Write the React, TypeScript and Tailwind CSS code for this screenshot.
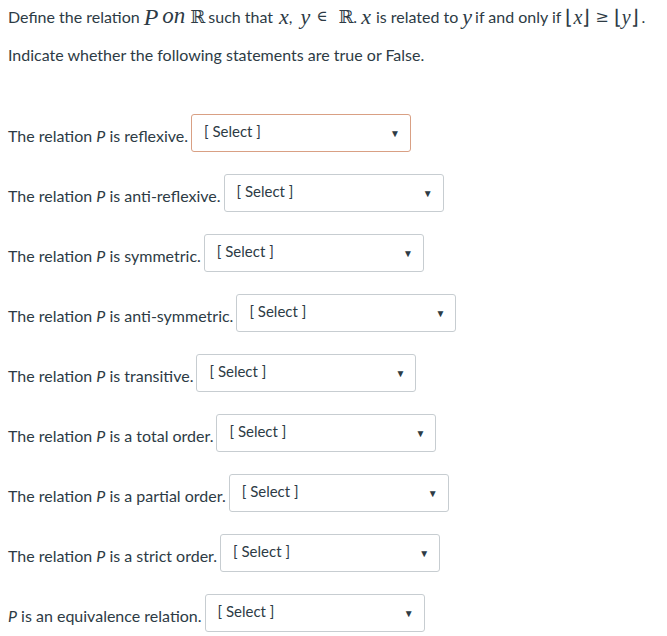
const rows: { pre?: string; post: string }[] = [
  { pre: 'The relation ', post: ' is reflexive.' },
  { pre: 'The relation ', post: ' is anti-reflexive.' },
  { pre: 'The relation ', post: ' is symmetric.' },
  { pre: 'The relation ', post: ' is anti-symmetric.' },
  { pre: 'The relation ', post: ' is transitive.' },
  { pre: 'The relation ', post: ' is a total order.' },
  { pre: 'The relation ', post: ' is a partial order.' },
  { pre: 'The relation ', post: ' is a strict order.' },
  { post: ' is an equivalence relation.' },
];

const serif = "font-['Liberation_Serif',serif]";
const dejavu = "font-['DejaVu_Serif',serif]";

function SelectBox({ focused }: { focused?: boolean }) {
  return (
    <div
      className={`ml-[3px] flex h-[38px] w-[220px] shrink-0 items-center justify-between rounded-[3px] bg-white pl-[12px] pr-[10px] ${
        focused ? 'border-[1.5px] border-[#d9a084]' : 'border border-[#c7cdd1]'
      }`}
    >
      <span className="-mt-[3px] text-[15px] text-[#2d3b45]">[ Select ]</span>
      <span className="text-[10px] text-[#2d3b45]">▼</span>
    </div>
  );
}

export default function App() {
  return (
    <div className="min-h-screen w-[667px] bg-white pl-[8px] font-['Lato',sans-serif] text-[#2d3b45]">
      <p className="flex h-[33px] items-center text-[16px] whitespace-nowrap">
        <span>Define the relation</span>
        <span className={`${serif} ml-[4px] text-[24px] italic`}>P</span>
        <span className={`${serif} ml-[4px] text-[23px] italic`}>on</span>
        <span className={`${dejavu} ml-[5px] text-[18px]`}>ℝ</span>
        <span className="ml-[3px]">such that</span>
        <span className={`${serif} ml-[6px] text-[22px] italic`}>x</span>
        <span>,</span>
        <span className={`${serif} ml-[8px] text-[22px] italic`}>y</span>
        <span className={`${dejavu} ml-[6px] text-[15px]`}>∈</span>
        <span className={`${dejavu} ml-[11px] text-[18px]`}>ℝ</span>
        <span>.</span>
        <span className={`${serif} ml-[4px] text-[22px] italic`}>x</span>
        <span className="ml-[5px]">is related to</span>
        <span className={`${serif} ml-[4px] text-[22px] italic`}>y</span>
        <span className="ml-[3px]">if and only if</span>
        <span className={`${serif} ml-[4px] text-[20px]`}>
          ⌊<i>x</i>⌋
        </span>
        <span className={`${dejavu} ml-[5px] text-[16px]`}>≥</span>
        <span className={`${serif} ml-[5px] text-[20px]`}>
          ⌊<i>y</i>⌋
        </span>
        <span className="ml-[3px]">.</span>
      </p>
      <p className="mt-[10px] text-[16px]">Indicate whether the following statements are true or False.</p>
      <div className="mt-[47px] flex flex-col gap-[22px]">
        {rows.map((r, i) => (
          <div key={i} className="flex h-[38px] items-center">
            <span className="mt-[6px] text-[16px] whitespace-nowrap">
              {r.pre}
              <i>P</i>
              {r.post}
            </span>
            <SelectBox focused={i === 0} />
          </div>
        ))}
      </div>
    </div>
  );
}
